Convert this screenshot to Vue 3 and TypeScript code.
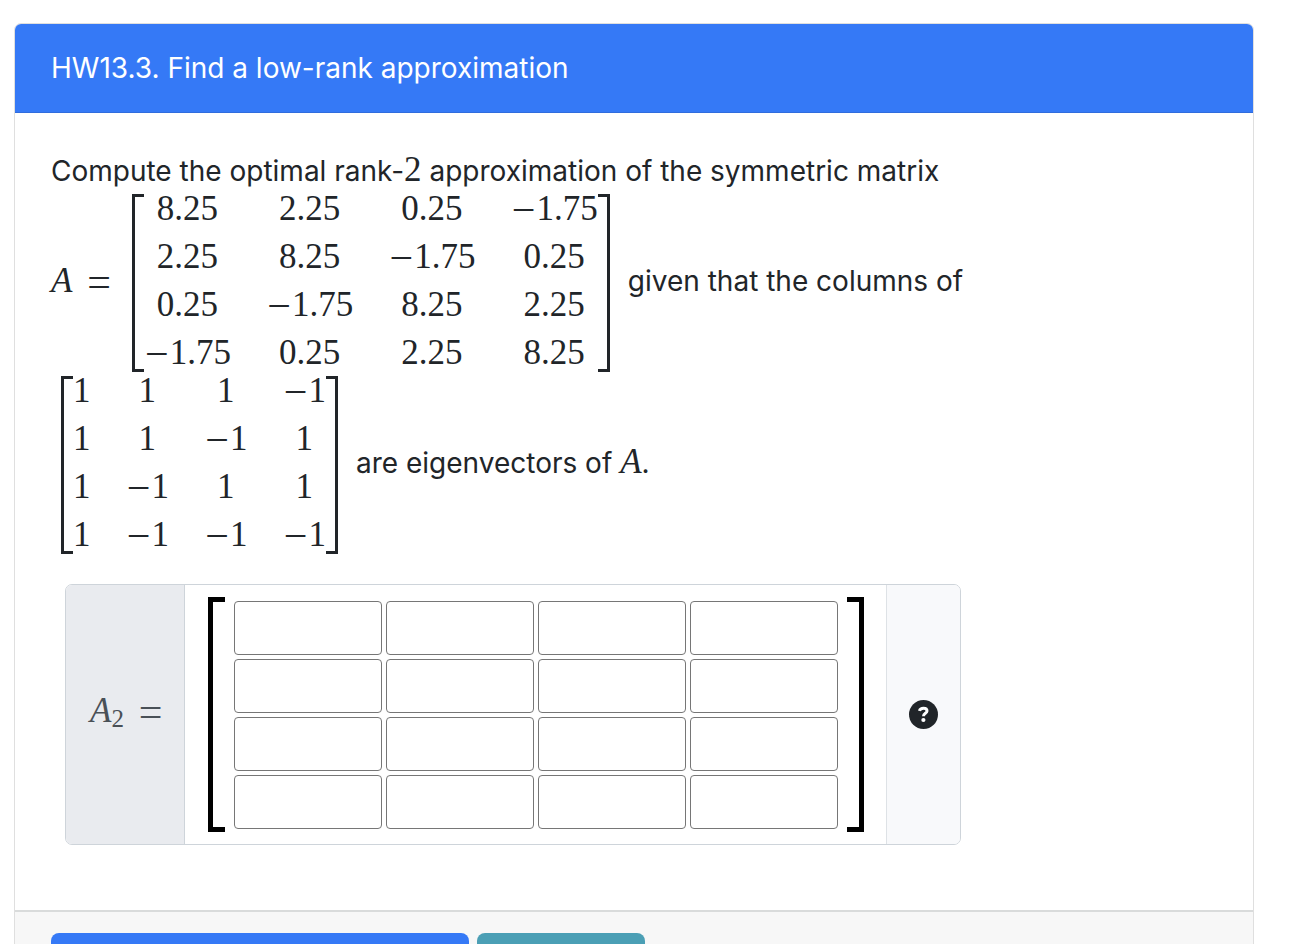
<script setup lang="ts">
import { ref } from 'vue'

const matrixA: number[][] = [
  [8.25, 2.25, 0.25, -1.75],
  [2.25, 8.25, -1.75, 0.25],
  [0.25, -1.75, 8.25, 2.25],
  [-1.75, 0.25, 2.25, 8.25],
]

const eigenvectors: number[][] = [
  [1, 1, 1, -1],
  [1, 1, -1, 1],
  [1, -1, 1, 1],
  [1, -1, -1, -1],
]

const answer = ref<string[][]>(Array.from({ length: 4 }, () => Array(4).fill('')))
</script>

<template>
  <div class="page">
    <main class="card">
      <header class="card-header">
        <h1>HW13.3. Find a low-rank approximation</h1>
      </header>

      <form class="card-form" @submit.prevent>
        <div class="card-body">
          <p class="line">Compute the optimal rank-<span class="math">2</span> approximation of the symmetric matrix</p>

          <div class="row">
            <span class="math"><i>A</i> <span class="op equals">=</span></span>
            <table class="matrix matrix-a">
              <tbody>
                <tr v-for="(cells, r) in matrixA" :key="r">
                  <td v-for="(value, c) in cells" :key="c"><span v-if="value < 0" class="op minus">−</span>{{ Math.abs(value) }}</td>
                </tr>
              </tbody>
            </table>
            <span class="text">given that the columns of</span>
          </div>

          <div class="row">
            <table class="matrix matrix-v">
              <tbody>
                <tr v-for="(cells, r) in eigenvectors" :key="r">
                  <td v-for="(value, c) in cells" :key="c"><span v-if="value < 0" class="op minus">−</span>{{ Math.abs(value) }}</td>
                </tr>
              </tbody>
            </table>
            <span class="text">are eigenvectors of <span class="math"><i>A</i></span>.</span>
          </div>

          <div class="answer">
            <div id="answer-label" class="answer-label">
              <span class="math"><i>A</i><sub>2</sub> <span class="op equals">=</span></span>
            </div>
            <div class="answer-field">
              <span class="bracket bracket-left"></span>
              <div class="grid" role="group" aria-labelledby="answer-label">
                <template v-for="(cells, r) in answer" :key="r">
                  <input
                    v-for="(_, c) in cells"
                    :key="c"
                    v-model="answer[r][c]"
                    type="text"
                    autocomplete="off"
                    :aria-label="`Row ${r + 1}, column ${c + 1}`"
                  />
                </template>
              </div>
              <span class="bracket bracket-right"></span>
            </div>
            <button type="button" class="help" aria-label="Help">
              <svg viewBox="0 0 29 29" width="29" height="29" aria-hidden="true">
                <circle cx="14.5" cy="14.5" r="14.5" fill="#212529" />
                <path
                  d="M10.4 10.9C11 9 12.500 8.300 14.500 8.300C16.700 8.300 18 9.400 18 11.100C18 13.400 14.500 13.300 14.500 16.200"
                  fill="none"
                  stroke="#fff"
                  stroke-width="3"
                />
                <circle cx="14.400" cy="20" r="2.100" fill="#fff" />
              </svg>
            </button>
          </div>
        </div>

        <footer class="card-footer">
          <button type="submit" class="btn btn-primary" aria-label="Save and grade"></button>
          <button type="button" class="btn btn-info" aria-label="Save only"></button>
        </footer>
      </form>
    </main>
  </div>
</template>

<style>
body {
  margin: 0;
  background: #fff;
}
</style>

<style scoped>
.page {
  box-sizing: border-box;
  height: 100vh;
  overflow: hidden;
  padding: 23px 42px 0 14px;
  color: #212529;
  font-family: Inter, "Liberation Sans", sans-serif;
  font-size: 28px;
  line-height: 44px;
}

.card {
  border: 1px solid #dfdfdf;
  border-radius: 7px;
  overflow: hidden;
}

.card-header {
  padding: 22px 36px;
  background: #3579f6;
  border-bottom: 1px solid #306cdd;
  color: #fff;
}

h1 {
  margin: 0;
  font-size: 28px;
  font-weight: 400;
}

.card-body {
  padding: 36px 36px 65px;
}

.line {
  margin: 0;
}

.math {
  font-family: "Liberation Serif", serif;
  font-size: 35px;
  line-height: 0;
  white-space: nowrap;
}

.row {
  display: flex;
  align-items: center;
  margin-bottom: 6px;
}

.op {
  display: inline-block;
  font-size: 42px;
  line-height: 0;
  text-align: center;
  vertical-align: -4px;
}

.minus {
  width: 26px;
}

.equals {
  margin-left: 6px;
}

.matrix {
  position: relative;
  border-collapse: collapse;
  font-family: "Liberation Serif", serif;
  font-size: 35px;
  line-height: 48px;
}

.matrix-a {
  margin: -8px 18px -8px 21px;
}

.matrix-v {
  margin: -8px 18px -8px 10px;
}

.matrix td {
  height: 48px;
  padding: 0 0 0 35px;
  text-align: center;
  white-space: nowrap;
}

.matrix td:first-child {
  padding-left: 12px;
}

.matrix td:last-child {
  padding-right: 12px;
}

.matrix::before,
.matrix::after {
  content: "";
  position: absolute;
  top: 9px;
  bottom: 5px;
  width: 9px;
  border: 3px solid #212529;
}

.matrix::before {
  left: 0;
  border-right: 0;
}

.matrix::after {
  right: 0;
  border-left: 0;
}

.answer {
  display: flex;
  width: fit-content;
  margin: 33px 0 0 14px;
  border: 1px solid #ced4da;
  border-radius: 7px;
  overflow: hidden;
}

.answer-label {
  display: flex;
  align-items: center;
  padding: 0 22px 0 24px;
  background: #e9ebef;
  border-right: 1px solid #ced4da;
  color: #495057;
}

sub {
  font-size: 25px;
  line-height: 0;
  vertical-align: -5px;
}

.answer-field {
  display: flex;
  gap: 9px;
  padding: 12px 22px 12px 23px;
}

.bracket {
  width: 12px;
  border: 5px solid #000;
}

.bracket-left {
  border-right: 0;
}

.bracket-right {
  border-left: 0;
}

.grid {
  display: grid;
  grid-template-columns: repeat(4, 148px);
  gap: 4px;
  padding: 4px 0 3px;
}

input {
  box-sizing: border-box;
  width: 100%;
  height: 54px;
  padding: 2px 8px;
  border: 1px solid #767676;
  border-radius: 4px;
  background: #fff;
  color: inherit;
  font: inherit;
}

.help {
  display: flex;
  align-items: center;
  padding: 0 22px;
  border: 0;
  border-left: 1px solid #dee2e6;
  background: #f8f9fb;
}

.card-footer {
  display: flex;
  gap: 8px;
  padding: 21px 36px;
  border-top: 2px solid #d9dbdb;
  background: #f7f7f7;
}

.btn {
  height: 76px;
  border: 0;
  border-radius: 8px;
}

.btn-primary {
  width: 418px;
  background: #3579f6;
}

.btn-info {
  width: 168px;
  background: #4b9fb5;
}
</style>
